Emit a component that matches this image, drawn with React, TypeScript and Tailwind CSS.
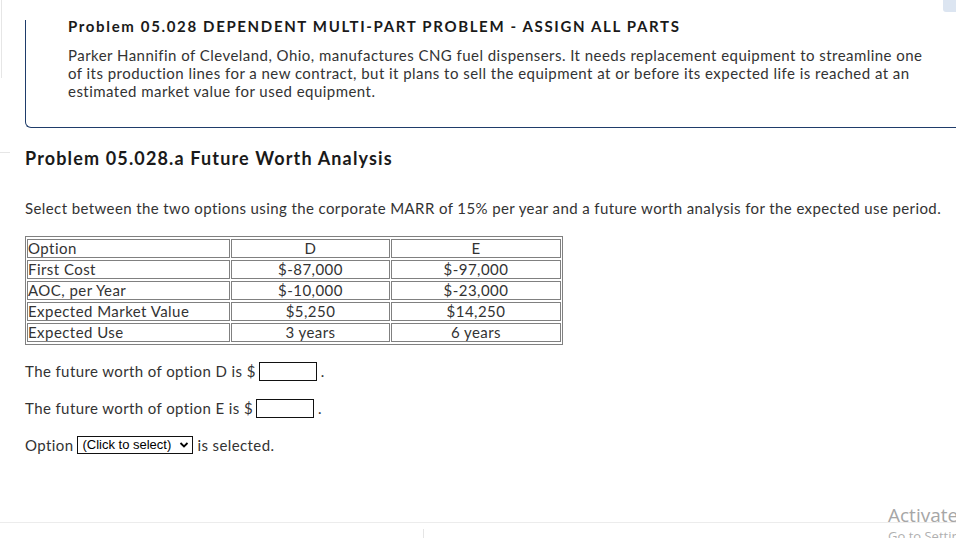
import React from "react";

const rows = [
  ["Option", "D", "E"],
  ["First Cost", "$-87,000", "$-97,000"],
  ["AOC, per Year", "$-10,000", "$-23,000"],
  ["Expected Market Value", "$5,250", "$14,250"],
  ["Expected Use", "3 years", "6 years"],
];

export default function App() {
  return (
    <div
      className="relative w-[956px] h-[538px] overflow-hidden bg-white text-[#333333]"
      style={{ fontFamily: "Lato, 'Open Sans', sans-serif" }}
    >
      {/* faint left strip */}
      <div className="absolute left-0 top-0 w-[2px] h-[78px] border-r border-[#e6e6e6]" />
      <div className="absolute right-0 top-0 w-[13px] h-[12px] bg-[#dce5f1] rounded-bl-[3px]" />

      <div className="pt-[20px]">
        <div className="flow-root ml-[25px] border-l border-b border-[#1f3c6a] rounded-bl-[6px] h-[108px] pl-[42px]">
          <div className="-mt-[3px] text-[15px] font-bold text-[#1a1a1a] leading-[18px] tracking-[1.65px] whitespace-nowrap">
            Problem 05.028 DEPENDENT MULTI-PART PROBLEM - ASSIGN ALL PARTS
          </div>
          <p className="mt-[11px] text-[15px] leading-[18px] tracking-[0.46px] whitespace-nowrap">
            Parker Hannifin of Cleveland, Ohio, manufactures CNG fuel dispensers. It needs replacement equipment to streamline one
            <br />
            of its production lines for a new contract, but it plans to sell the equipment at or before its expected life is reached at an
            <br />
            estimated market value for used equipment.
          </p>
        </div>

        <div className="relative">
          <div className="absolute left-0 top-[24px] w-[10px] border-t border-[#e6e6e6]" />
        </div>

        <div className="pl-[25px]">
          <h2 className="mt-[19px] text-[18px] font-bold text-[#1a1a1a] leading-[22px] tracking-[1.15px]">
            Problem 05.028.a Future Worth Analysis
          </h2>
          <p className="mt-[30px] text-[15px] leading-[18px] tracking-[0.4px] whitespace-nowrap">
            Select between the two options using the corporate MARR of 15% per year and a future worth analysis for the expected use period.
          </p>

          <table className="mt-[19px] border-separate border-spacing-x-[1px] border-spacing-y-[2px] border border-[#808080] text-[15px] tracking-[0.45px]">
            <tbody>
              {rows.map((r, i) => (
                <tr key={i}>
                  <td className="border border-[#808080] w-[203px] h-[19px] p-0 leading-[17px]">{r[0]}</td>
                  <td className="border border-[#808080] w-[159px] h-[19px] p-0 text-center leading-[17px]">{r[1]}</td>
                  <td className="border border-[#808080] w-[170px] h-[19px] p-0 text-center leading-[17px]">{r[2]}</td>
                </tr>
              ))}
            </tbody>
          </table>

          <div className="mt-[16px] flex items-center h-[20px] text-[15px] tracking-[0.4px]">
            <span>The future worth of option D is $</span>
            <span className="ml-[3px] inline-block w-[58px] h-[19px] border border-[#111]" />
            <span className="ml-[4px]">.</span>
          </div>
          <div className="mt-[17px] flex items-center h-[20px] text-[15px] tracking-[0.4px]">
            <span>The future worth of option E is $</span>
            <span className="ml-[3px] inline-block w-[58px] h-[19px] border border-[#111]" />
            <span className="ml-[4px]">.</span>
          </div>
          <div className="mt-[17px] flex items-center h-[20px] text-[15px] tracking-[0.4px]">
            <span>Option</span>
            <span
              className="ml-[4px] inline-flex items-center h-[18px] w-[116px] border border-[#111] pl-[4px] pr-[3px] text-[13px] text-black tracking-normal"
              style={{ fontFamily: "'Liberation Sans', Arial, sans-serif" }}
            >
              (Click to select)
              <svg className="ml-auto" width="10" height="8" viewBox="0 0 10 8">
                <path d="M1.5 2 L5 5.5 L8.5 2" stroke="#000" strokeWidth="1.8" fill="none" />
              </svg>
            </span>
            <span className="ml-[4px]">is selected.</span>
          </div>
        </div>
      </div>

      {/* bottom bar */}
      <div className="absolute left-0 right-0 top-[522px] border-t border-[#ececec]" />
      <div className="absolute left-[423px] top-[529px] h-[10px] border-l border-[#e5e5e5]" />
      <div
        className="absolute left-[888px] top-[503px] text-[19px] text-[#a6a6a6] leading-[24px] whitespace-nowrap"
        style={{ fontFamily: "'Open Sans', 'Noto Sans', sans-serif" }}
      >
        Activate
      </div>
      <div
        className="absolute left-[888px] top-[528px] text-[13px] text-[#b0b0b0] leading-[16px] whitespace-nowrap"
        style={{ fontFamily: "'Open Sans', 'Noto Sans', sans-serif" }}
      >
        Go to Settings
      </div>
    </div>
  );
}
